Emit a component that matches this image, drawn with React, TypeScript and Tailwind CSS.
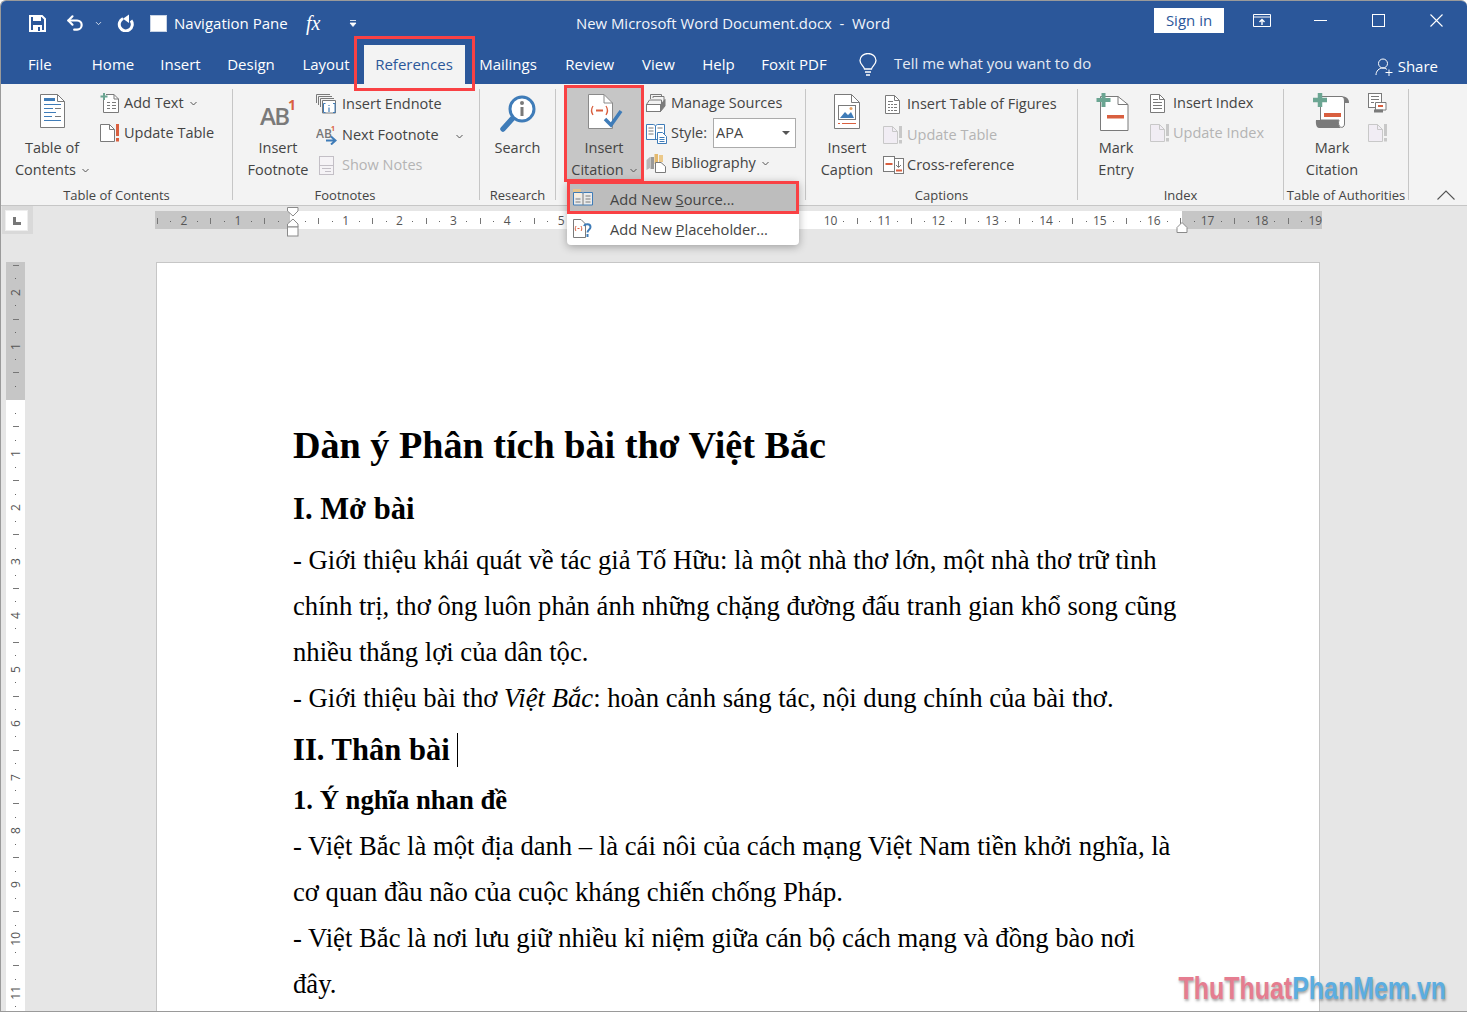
import React from "react";
import { Undo2, ChevronDown } from "lucide-react";

const G = "#7a7a7a";
const BL = "#3f7cb8";
const RD = "#d95f3f";
const GR = "#6ba592";

const Chev = ({ c = "#555" }: { c?: string }) => (
  <svg width="7" height="5" viewBox="0 0 7 5" className="inline-block ml-[6px] shrink-0"><path d="M.5 1l3 3 3-3" fill="none" stroke={c} /></svg>
);

function Doc({ w, h, stroke = G, fill = "#fff", fold = 7, children }: { w: number; h: number; stroke?: string; fill?: string; fold?: number; children?: React.ReactNode }) {
  return (
    <svg width={w} height={h} viewBox={`0 0 ${w} ${h}`} className="shrink-0">
      <path d={`M.5 .5H${w - fold - 0.5}L${w - 0.5} ${fold + 0.5}V${h - 0.5}H.5Z`} fill={fill} stroke={stroke} />
      <path d={`M${w - fold - 0.5} .5V${fold + 0.5}H${w - 0.5}`} fill="none" stroke={stroke} />
      {children}
    </svg>
  );
}

const Lines = ({ x, y, w, n, gap = 3, c = G }: { x: number; y: number; w: number; n: number; gap?: number; c?: string }) => (
  <>
    {Array.from({ length: n }).map((_, i) => (
      <path key={i} d={`M${x} ${y + i * gap + 0.5}h${w}`} stroke={c} />
    ))}
  </>
);

const IconToc = () => (
  <Doc w={25} h={34}>
    <rect x="4" y="4" width="11" height="3" fill={BL} />
    <Lines x={4} y={10} w={17} n={1} c={BL} />
    <Lines x={4} y={14} w={9} n={1} c={BL} />
    <Lines x={15} y={14} w={6} n={1} c={G} />
    <Lines x={4} y={18} w={12} n={1} c={BL} />
    <Lines x={4} y={22} w={8} n={1} c={BL} />
    <Lines x={15} y={22} w={6} n={1} c={G} />
    <Lines x={4} y={26} w={17} n={1} c={BL} />
  </Doc>
);

const IconAddText = () => (
  <svg width="19" height="20" viewBox="0 0 19 20" className="shrink-0">
    <path d="M3.500 5.500V19.500H18.500V6L14 1.500H6" fill="#fff" stroke={G} />
    <path d="M14 1.500V6H18.500" fill="none" stroke={G} />
    <path d="M7 9.500h3M12 9.500h4M7 12.500h3M12 12.500h4M7 15.500h3M12 15.500h4" stroke={G} />
    <path d="M4 0v7M.5 3.500h7" stroke={GR} strokeWidth="2" />
  </svg>
);

const IconUpdate = ({ dis }: { dis?: boolean }) => (
  <svg width="20" height="20" viewBox="0 0 20 20" className="shrink-0">
    <path d="M.5 1.500H9.500L14.500 6.500V18.500H.5Z" fill={dis ? "#f1edf4" : "#fff"} stroke={dis ? "#c8c8c8" : G} />
    <path d="M9.500 1.500V6.500H14.500" fill="none" stroke={dis ? "#c8c8c8" : G} />
    <rect x="16" y="1" width="3" height="12" fill={dis ? "#c8c8c8" : RD} />
    <rect x="16" y="15" width="3" height="3.500" fill={dis ? "#c8c8c8" : RD} />
  </svg>
);

const IconEndnote = () => (
  <svg width="20" height="20" viewBox="0 0 20 20" className="shrink-0">
    <path d="M.5 9V.5H14M2.500 11V2.500H16M4.500 13V4.500H18" fill="none" stroke={G} />
    <path d="M6.500 19V6.500H19.500V19H6.500" fill="#fff" stroke={G} />
    <path d="M9.500 9.500h-2v9h2M17 9.500h2v9h-2" fill="none" stroke={BL} />
    <path d="M13 11v1M13 13.500v4.500" stroke={BL} strokeWidth="1.200" />
  </svg>
);

const IconNextFoot = () => (
  <svg width="21" height="20" viewBox="0 0 21 20" className="shrink-0">
    <text x="0" y="13" fontSize="12" fontWeight="600" fill="#777" fontFamily="'Open Sans',sans-serif">AB</text>
    <text x="15" y="6" fontSize="7" fontWeight="700" fill={RD} fontFamily="'Open Sans',sans-serif">1</text>
    <path d="M10 15.500h9M15 11.500l4.500 4-4.500 4" fill="none" stroke={BL} strokeWidth="2" />
  </svg>
);

const IconNotes = () => (
  <svg width="15" height="19" viewBox="0 0 15 19" className="shrink-0">
    <rect x=".5" y=".5" width="14" height="18" fill="#f5f3f6" stroke="#c3bfc6" />
    <path d="M.5 9.500h14M3 12.500h9M6 15.500h6" stroke="#c3bfc6" />
  </svg>
);

const IconSearch = () => (
  <svg width="36" height="38" viewBox="0 0 36 38" className="shrink-0">
    <circle cx="22" cy="14" r="12" fill="#fff" stroke="#3f7cb8" strokeWidth="3" />
    <path d="M12 24L3 34" stroke="#3f7cb8" strokeWidth="5.500" strokeLinecap="round" />
    <circle cx="22" cy="8" r="2" fill={G} />
    <rect x="20.500" y="12" width="3" height="9" fill={G} />
  </svg>
);

const IconCitation = () => (
  <svg width="36" height="36" viewBox="0 0 36 36" className="shrink-0">
    <path d="M1.500 .5H17L25.500 9V34.500H1.500Z" fill="#fff" stroke="#8a8a8a" />
    <path d="M17 .5V9H25.500" fill="none" stroke="#8a8a8a" />
    <path d="M6 12c-2 3-2 6 0 9M19 12c2 3 2 6 0 9" fill="none" stroke={RD} strokeWidth="1.300" />
    <path d="M9 16.500h7" stroke={RD} strokeWidth="2" />
    <path d="M18 25l6 6L34 17" fill="none" stroke="#3f7cb8" strokeWidth="3.500" />
  </svg>
);

const IconManage = () => (
  <svg width="20" height="20" viewBox="0 0 20 20" className="shrink-0">
    <path d="M4.500 6V1.500H15.500V4M7 5V3.500H18V12" fill="none" stroke={G} />
    <path d="M3.500 7H15.500V11" fill="none" stroke={G} />
    <rect x=".5" y="11.500" width="14" height="7" fill="#fff" stroke={G} />
    <path d="M.5 11.500L3.500 7M14.500 11.500L19 6.500V13L14.500 18.500" fill={G} stroke={G} />
  </svg>
);

const IconStyle = () => (
  <svg width="21" height="21" viewBox="0 0 21 21" className="shrink-0">
    <path d="M.5 1.500H7C8 1.500 9 2 9.500 3 10 2 11 1.500 12 1.500H18.500V16.500H.5Z" fill="#fff" stroke="#3f7cb8" />
    <path d="M9.500 3V16.500" stroke="#3f7cb8" />
    <path d="M2.500 5h5M2.500 8h5M2.500 11h5M11.500 5h5" stroke={G} />
    <path d="M11.500 9.500H16.500L20.500 13.500V20.500H11.500Z" fill="#fff" stroke="#3f7cb8" />
    <path d="M13.500 14.500h5M13.500 16.500h5M13.500 18.500h5" stroke={BL} />
  </svg>
);

const IconBiblio = () => (
  <svg width="20" height="20" viewBox="0 0 20 20" className="shrink-0">
    <path d="M.5 7L4 4V15L.5 17Z" fill="#b8b8b8" />
    <rect x="4.500" y="4" width="3.500" height="12" fill="#9a9a9a" />
    <rect x="8.500" y="1" width="3.500" height="10" fill="#e4b96e" />
    <rect x="13" y="2" width="4" height="7" fill="#ecc98a" />
    <path d="M9.500 9.500H15L19.500 13.500V19.500H9.500Z" fill="#fff" stroke={G} />
  </svg>
);

const IconCaption = () => (
  <Doc w={26} h={35} fold={8}>
    <rect x="4.500" y="11.500" width="17" height="14" fill="#fff" stroke={G} />
    <path d="M6 24l5-6 3 3 3-3 3 6Z" fill={BL} />
    <circle cx="17" cy="14.500" r="1.500" fill="#e8a060" />
    <path d="M4 29.500h2M8 29.500h14" stroke={RD} />
  </Doc>
);

const IconFigures = () => (
  <Doc w={15} h={19} fold={5}>
    <path d="M3 6.500h5M3 9.500h2M6 9.500h2M9 9.500h3M3 12.500h2M6 12.500h2M9 12.500h3M3 15.500h2M6 15.500h2M9 15.500h3" stroke={G} />
  </Doc>
);

const IconCross = () => (
  <svg width="21" height="19" viewBox="0 0 21 19" className="shrink-0">
    <rect x=".5" y=".5" width="11" height="15" fill="#fff" stroke={G} />
    <rect x="11.500" y="2.500" width="9" height="15" fill="#fff" stroke={G} />
    <path d="M2.500 8h7" stroke={RD} strokeWidth="2" />
    <path d="M15.500 5v6M13 9l2.500 2.500L18 9" fill="none" stroke={G} />
    <path d="M13 14.500h6" stroke={RD} strokeWidth="2" />
  </svg>
);

const IconMark = () => (
  <svg width="33" height="38" viewBox="0 0 33 38" className="shrink-0">
    <path d="M4.500 3.500H22L32 11.500V37.500H4.500Z" fill="#fff" stroke={G} />
    <path d="M22 3.500V11.500H32" fill="none" stroke={G} />
    <rect x="11" y="22" width="17" height="3.500" fill={RD} />
    <path d="M7.500 0v14M.5 7h14" stroke={GR} strokeWidth="4" />
  </svg>
);

const IconIndex = () => (
  <Doc w={15} h={19} fold={5}>
    <path d="M3 5.500h5M3 8.500h9M3 11.500h9M3 14.500h9" stroke={G} />
  </Doc>
);

const IconMarkCit = () => (
  <svg width="38" height="37" viewBox="0 0 38 37" className="shrink-0">
    <path d="M29 3.500C33 3.500 36 5 36 10H31Z" fill={G} />
    <path d="M7.500 3.500H29C31 4 31.500 6 31.500 9V31C31.500 34 29 35 27.500 34 25.500 33 25 30 26 27H7.500Z" fill="#fff" stroke={G} />
    <path d="M3 27H25.500C25 30 25.500 33 27.500 35H6C3.500 35 2.500 31 3 27Z" fill={G} />
    <rect x="11" y="20" width="17" height="4" fill={RD} />
    <path d="M7 0v14M0 7h14" stroke={GR} strokeWidth="4.500" />
  </svg>
);

const IconMarkSmall = () => (
  <svg width="19" height="20" viewBox="0 0 19 20" className="shrink-0">
    <rect x=".5" y=".5" width="13" height="14" fill="#fff" stroke={G} />
    <path d="M3 3.500h8M3 6.500h8M3 9.500h3" stroke={G} />
    <path d="M7.500 9.500H18V17H7.500Z" fill="#fff" stroke={G} />
    <path d="M10 13h5" stroke={RD} strokeWidth="2" />
    <rect x="6" y="16.500" width="9" height="3" fill={G} />
  </svg>
);

function Big({ icon, lines, chev, w, className = "" }: { icon: React.ReactNode; lines: string[]; chev?: boolean; w: string; className?: string }) {
  return (
    <div className={`flex flex-col items-center shrink-0 ${w} ${className}`}>
      <div className="h-[49px] pt-[6px] shrink-0 flex items-start justify-center">{icon}</div>
      <div className="leading-[22px] whitespace-nowrap">{lines[0]}</div>
      <div className="leading-[22px] whitespace-nowrap flex items-center">
        {lines[1]}
        {chev && <Chev />}
      </div>
    </div>
  );
}

function Row({ icon, slot, label, dis, chev, h = "h-[30px]" }: { icon: React.ReactNode; slot: string; label: string; dis?: boolean; chev?: boolean; h?: string }) {
  return (
    <div className={`flex items-center whitespace-nowrap ${h} ${dis ? "text-[#b4b4b4]" : ""}`}>
      <div className={`${slot} shrink-0 flex items-center`}>{icon}</div>
      {label}
      {chev && <Chev />}
    </div>
  );
}

function Group({ w, label, pr = "", children }: { w: string; label: string; pr?: string; children: React.ReactNode }) {
  return (
    <div className={`${w} shrink-0 pt-[4px] flex flex-col`}>
      <div className="h-[98px] flex">{children}</div>
      <div className={`h-[18px] leading-[18px] text-[13px] text-center whitespace-nowrap ${pr}`}>{label}</div>
    </div>
  );
}

const Sep = () => <div className="w-px h-[111px] mt-[5px] bg-[#c6c6c6] shrink-0" />;

const Tab = ({ w, t, active }: { w: string; t: string; active?: boolean }) => (
  <div className={`${w} h-[39px] pb-[1px] flex items-center justify-center shrink-0 whitespace-nowrap ${active ? "bg-[#f3f3f3] text-[#2b579a]" : ""}`}>{t}</div>
);

function Tick({ j }: { j: number }) {
  const m = ((j % 4) + 4) % 4;
  const n = j / 4;
  if (j === 0 || (j > 20 && j < 40)) return <div className="w-[13.47px] shrink-0" />;
  return (
    <div className="w-[13.47px] pt-[2px] shrink-0 flex items-center justify-center text-[12px] text-[#555]">
      {m === 0 ? <span>{Math.abs(n)}</span> : m === 2 ? <div className="w-px h-[6px] bg-[#777]" /> : <div className="w-px h-px bg-[#666]" />}
    </div>
  );
}

function VTick({ j }: { j: number }) {
  const m = ((j % 4) + 4) % 4;
  if (j === 0) return <div className="h-[13.47px] shrink-0" />;
  return (
    <div className="h-[13.47px] shrink-0 flex items-center justify-center text-[12px] leading-none text-[#555]">
      {m === 0 ? <span className="[writing-mode:vertical-rl] rotate-180">{Math.abs(j / 4)}</span> : m === 2 ? <div className="h-px w-[6px] bg-[#777]" /> : <div className="w-px h-px bg-[#666]" />}
    </div>
  );
}

const hTicks = Array.from({ length: 88 }, (_, i) => i - 10);
const vTicks = Array.from({ length: 57 }, (_, i) => i - 10);

export default function App() {
  return (
    <div className="relative w-[1467px] h-[1012px] overflow-hidden flex flex-col bg-white border-l border-b border-t border-[#9a9a9a] rounded-t-[6px] text-[14.5px] text-[#444] font-['Open_Sans','Noto_Sans',sans-serif]">
      {/* title bar */}
      <div className="h-[41px] bg-[#2b579a] text-white flex shrink-0 text-[15px]">
        <div className="flex items-center pt-[3px] h-full">
          <svg width="17" height="17" viewBox="0 0 17 17" className="ml-[28px] shrink-0">
            <path d="M1 1H13L16 4V16H1Z" fill="none" stroke="#fff" strokeWidth="2" />
            <rect x="4" y="1" width="8" height="5" fill="#fff" />
            <rect x="4" y="10" width="9" height="6" fill="#fff" />
            <rect x="9" y="12" width="2" height="4" fill="#2b579a" />
          </svg>
          <Undo2 size={20} strokeWidth={2.6} className="ml-[19px] shrink-0" />
          <ChevronDown size={9} strokeWidth={2} className="ml-[9px] shrink-0" />
          <svg width="18" height="18" viewBox="0 0 18 18" className="ml-[14px] shrink-0">
            <path d="M6 4.500A6.500 6.500 0 1 0 14 6.500" fill="none" stroke="#fff" strokeWidth="3" />
            <path d="M12 .5V9L6 4.750Z" fill="#fff" />
          </svg>
          <div className="w-[17px] h-[17px] bg-white ml-[15px] shrink-0 border border-[#c9d4e5]" />
          <span className="ml-[7px] w-[113px] whitespace-nowrap">Navigation Pane</span>
          <span className="ml-[19px] w-[16px] italic font-['Liberation_Serif',serif] text-[20px]">fx</span>
          <svg width="8" height="7" viewBox="0 0 8 7" className="ml-[27px] shrink-0">
            <path d="M1 .5h6M1 3h6L4 6.500Z" fill="#fff" stroke="#fff" strokeWidth=".8" />
          </svg>
          <div className="w-[534px] ml-[1px] whitespace-nowrap pl-[218px] text-[14.9px] text-[#f2f5fa]">New Microsoft Word Document.docx&nbsp; -&nbsp; Word</div>
        </div>
        <div className="flex items-center pb-[3px] h-full">
          <div className="ml-[262px] w-[70px] h-[25px] bg-white text-[#2b579a] flex items-center justify-center shrink-0">Sign in</div>
          <svg width="18" height="13" viewBox="0 0 18 13" className="ml-[29px] shrink-0">
            <path d="M.5 .5H17.500V12.500H.5ZM.5 3H17.500" fill="none" stroke="#fff" />
            <path d="M9 11V5.500M6.500 8L9 5.500 11.500 8" fill="none" stroke="#fff" strokeWidth="1.400" />
          </svg>
          <div className="ml-[43px] w-[13px] h-px bg-white shrink-0" />
          <div className="ml-[45px] w-[13px] h-[13px] border border-white shrink-0" />
          <svg width="13" height="13" viewBox="0 0 13 13" className="ml-[45px] shrink-0">
            <path d="M.5 .5l12 12M12.500 .5l-12 12" stroke="#fff" strokeWidth="1.100" />
          </svg>
        </div>
      </div>
      {/* tabs */}
      <div className="h-[42px] bg-[#2b579a] text-white flex items-end shrink-0 text-[15px]">
        <Tab w="w-[77.5px]" t="File" />
        <Tab w="w-[69px]" t="Home" />
        <Tab w="w-[66px]" t="Insert" />
        <Tab w="w-[75px]" t="Design" />
        <Tab w="w-[75px]" t="Layout" />
        <Tab w="w-[101px]" t="References" active />
        <Tab w="w-[87px]" t="Mailings" />
        <Tab w="w-[76.5px]" t="Review" />
        <Tab w="w-[61px]" t="View" />
        <Tab w="w-[59px]" t="Help" />
        <Tab w="w-[92px]" t="Foxit PDF" />
        <div className="h-[39px] pb-[2px] flex items-center ml-[19px] shrink-0 text-[#e6ebf3]">
          <svg width="18" height="24" viewBox="0 0 18 24" className="shrink-0 mt-[2px]">
            <path d="M5.500 16C5 13 1 11.500 1 7.500A8 7 0 0 1 17 7.500C17 11.500 13 13 12.500 16ZM6 19h6M7 22h4" fill="none" stroke="#fff" strokeWidth="1.300" />
          </svg>
          <span className="ml-[17px] whitespace-nowrap">Tell me what you want to do</span>
        </div>
        <div className="h-[39px] pt-[4px] flex items-center ml-auto mr-[29px] shrink-0">
          <svg width="18" height="20" viewBox="0 0 18 20" className="shrink-0">
            <circle cx="8" cy="6.500" r="4.500" fill="none" stroke="#fff" />
            <path d="M1 18c0-4 3-7 7-7 1.500 0 3 .5 4 1.500M14 12.500v6.500M10.500 15.500h7" fill="none" stroke="#fff" />
          </svg>
          <span className="ml-[5px] whitespace-nowrap">Share</span>
        </div>
      </div>
      {/* ribbon */}
      <div className="h-[122px] bg-[#f3f3f3] border-b border-[#c6c6c6] flex shrink-0">
        <Group w="w-[231px]" label="Table of Contents">
          <Big w="w-[90px]" className="ml-[6px]" icon={<IconToc />} lines={["Table of", "Contents"]} chev />
          <div className="ml-[3px]">
            <Row slot="w-[24px]" icon={<IconAddText />} label="Add Text" chev />
            <Row slot="w-[24px]" icon={<IconUpdate />} label="Update Table" />
          </div>
        </Group>
        <Sep />
        <Group w="w-[246px]" label="Footnotes" pr="pr-[22px]">
          <Big w="w-[70px]" className="ml-[10px]" icon={<div className="relative w-[36px] h-[36px] text-[24px] font-semibold text-[#7a7a7a] pt-[4px] leading-[36px] tracking-[-1.5px]">AB<span className="absolute top-[2px] right-[0px] text-[14px] leading-[18px] font-bold tracking-normal text-[#d95f3f]">1</span></div>} lines={["Insert", "Footnote"]} />
          <div className="ml-[3px] pt-[1px]">
            <Row slot="w-[26px]" h="h-[30.5px]" icon={<IconEndnote />} label="Insert Endnote" />
            <div className="flex items-center">
              <Row slot="w-[26px]" h="h-[30.5px]" icon={<IconNextFoot />} label="Next Footnote" />
              <div className="ml-[11px]"><Chev /></div>
            </div>
            <Row slot="w-[26px]" h="h-[30.5px]" icon={<div className="ml-[3px]"><IconNotes /></div>} label="Show Notes" dis />
          </div>
        </Group>
        <Sep />
        <Group w="w-[75px]" label="Research">
          <Big w="w-[75px]" icon={<div className="pt-[1px]"><IconSearch /></div>} lines={["Search", ""]} />
        </Group>
        <Sep />
        <Group w="w-[249px]" label="">
          <Big w="w-[74px]" className="ml-[11px] bg-[#c6c6c6] h-[92px]" icon={<div className="pl-[2px]"><IconCitation /></div>} lines={["Insert", "Citation"]} chev />
          <div className="ml-[5px]">
            <Row slot="w-[25px]" icon={<IconManage />} label="Manage Sources" />
            <div className="flex items-center h-[30px]">
              <div className="w-[25px] shrink-0"><IconStyle /></div>
              <span className="w-[42px]">Style:</span>
              <div className="w-[83px] h-[30px] border border-[#ababab] bg-white flex items-center pl-[2px] pr-[5px] justify-between">
                <span>APA</span>
                <svg width="8" height="4" viewBox="0 0 8 4"><path d="M0 0h8L4 4Z" fill="#555" /></svg>
              </div>
            </div>
            <Row slot="w-[25px]" icon={<IconBiblio />} label="Bibliography" chev />
          </div>
        </Group>
        <Sep />
        <Group w="w-[271px]" label="Captions">
          <Big w="w-[70px]" className="ml-[6px]" icon={<IconCaption />} lines={["Insert", "Caption"]} />
          <div className="ml-[1px] pt-[1px]">
            <Row slot="w-[24px]" h="h-[30.5px]" icon={<div className="ml-[2px]"><IconFigures /></div>} label="Insert Table of Figures" />
            <Row slot="w-[24px]" h="h-[30.5px]" icon={<IconUpdate dis />} label="Update Table" dis />
            <Row slot="w-[24px]" h="h-[30.5px]" icon={<IconCross />} label="Cross-reference" />
          </div>
        </Group>
        <Sep />
        <Group w="w-[205px]" label="Index">
          <Big w="w-[68px]" className="ml-[4px]" icon={<div className="-mt-[1px] mr-[7px]"><IconMark /></div>} lines={["Mark", "Entry"]} />
          <div>
            <Row slot="w-[23px]" icon={<IconIndex />} label="Insert Index" />
            <Row slot="w-[23px]" icon={<IconUpdate dis />} label="Update Index" dis />
          </div>
        </Group>
        <Sep />
        <Group w="w-[124px]" label="Table of Authorities">
          <Big w="w-[70px]" className="ml-[13px]" icon={<div className="-mt-[1px]"><IconMarkCit /></div>} lines={["Mark", "Citation"]} />
          <div className="ml-[1px]">
            <Row slot="w-[19px]" icon={<IconMarkSmall />} label="" />
            <Row slot="w-[19px]" icon={<IconUpdate dis />} label="" />
          </div>
        </Group>
        <Sep />
        <div className="flex-1 flex items-end justify-end pb-[5px] pr-[12px]">
          <svg width="18" height="10" viewBox="0 0 18 10"><path d="M.5 9.500L9 1l8.500 8.500" fill="none" stroke="#555" strokeWidth="1.100" /></svg>
        </div>
      </div>
      {/* document area */}
      <div className="flex-1 min-h-0 bg-[#e6e6e6] flex flex-col overflow-hidden">
        <div className="h-[56px] flex shrink-0">
          <div className="w-[31px] h-[28px] bg-[#d9d9d9] ml-[1px] pt-[4px] pl-[3px] shrink-0">
            <div className="w-[23px] h-[21px] bg-white border border-[#eee] relative flex items-center justify-center">
              <svg width="8" height="8" viewBox="0 0 8 8"><path d="M0 0h3v5h5v3H0Z" fill="#777" /></svg>
            </div>
          </div>
          <div className="relative ml-[122px] mt-[5px] w-[1167px] h-[18px] shrink-0">
            <div className="absolute inset-0 overflow-hidden flex bg-[linear-gradient(to_right,#c6c6c6_135px,#fff_135px,#fff_1027px,#c6c6c6_1027px)]">
              <div className="flex -ml-[4.7px] leading-[18px]">
                {hTicks.map((j) => <Tick key={j} j={j} />)}
              </div>
            </div>
            <svg width="12" height="30" viewBox="0 0 12 30" className="absolute left-[132px] -top-[4px]">
              <path d="M.5 .5H11V4L6 9 .5 4Z" fill="#fff" stroke="#8a8a8a" />
              <path d="M6 12L11 17V20H.5V17Z" fill="#fff" stroke="#8a8a8a" />
              <rect x=".5" y="20" width="10.500" height="9" fill="#fff" stroke="#8a8a8a" />
            </svg>
            <svg width="12" height="11" viewBox="0 0 12 11" className="absolute left-[1021px] top-[11px]">
              <path d="M6 .5L11 5.500V10.500H1V5.500Z" fill="#fff" stroke="#8a8a8a" />
            </svg>
          </div>
        </div>
        <div className="flex-1 min-h-0 flex overflow-hidden">
          <div className="ml-[5px] w-[19px] shrink-0 overflow-hidden bg-[linear-gradient(to_bottom,#c6c6c6_138px,#fff_138px)]">
            <div className="flex flex-col -mt-[3.5px]">
              {vTicks.map((j) => <VTick key={j} j={j} />)}
            </div>
          </div>
          <div className="ml-[131px] w-[1164px] shrink-0 bg-white border-l border-r border-t border-[#c6c6c6] pl-[136px] pt-[158px] text-black font-['Liberation_Serif','Times_New_Roman',serif] whitespace-nowrap">
            <h1 className="text-[38.15px] font-bold leading-[48px]">Dàn ý Phân tích bài thơ Việt Bắc</h1>
            <h2 className="text-[30.6px] font-bold leading-[40px] mt-[20px]">I. Mở bài</h2>
            <div className="text-[26.67px] leading-[46px] mt-[8px]">
              <p>- Giới thiệu khái quát về tác giả Tố Hữu: là một nhà thơ lớn, một nhà thơ trữ tình</p>
              <p>chính trị, thơ ông luôn phản ánh những chặng đường đấu tranh gian khổ song cũng</p>
              <p>nhiều thắng lợi của dân tộc.</p>
              <p>- Giới thiệu bài thơ <i>Việt Bắc</i>: hoàn cảnh sáng tác, nội dung chính của bài thơ.</p>
            </div>
            <h2 className="text-[30.6px] font-bold leading-[46px] mt-[6px] flex items-center">
              II. Thân bài
              <span className="inline-block w-px h-[34px] bg-black ml-[7px]" />
            </h2>
            <h3 className="text-[26.67px] font-bold leading-[46px] mt-[4px]">1. Ý nghĩa nhan đề</h3>
            <div className="text-[26.67px] leading-[46px]">
              <p>- Việt Bắc là một địa danh – là cái nôi của cách mạng Việt Nam tiền khởi nghĩa, là</p>
              <p>cơ quan đầu não của cuộc kháng chiến chống Pháp.</p>
              <p>- Việt Bắc là nơi lưu giữ nhiều kỉ niệm giữa cán bộ cách mạng và đồng bào nơi</p>
              <p>đây.</p>
            </div>
          </div>
        </div>
      </div>
      {/* dropdown menu */}
      <div className="absolute left-[566px] top-[180px] w-[232px] h-[64px] bg-white rounded-[4px] shadow-[0_2px_8px_rgba(0,0,0,0.3)] py-[2px] text-[14.7px]">
        <div className="h-[30px] pt-[3px] bg-[#bdbdbd] flex items-center pl-[6px]">
          <svg width="20" height="18" viewBox="0 0 20 18" className="shrink-0 -mt-[3px]">
            <rect x="0" y="0" width="8" height="8" fill="#e6c48c" />
            <path d="M.5 3.500H9.500L10 4.500 10.500 3.500H19.500V16H.5Z" fill="#fff" fillOpacity=".7" stroke="#3f7cb8" />
            <path d="M10 4.500V16M12.500 7h5M12.500 10h5M12.500 13h5M2.500 10h5M2.500 13h5" stroke={G} />
          </svg>
          <span className="ml-[17px]">Add New <span className="underline">S</span>ource...</span>
        </div>
        <div className="h-[31px] pt-[2px] flex items-center pl-[6px]">
          <svg width="20" height="20" viewBox="0 0 20 20" className="shrink-0 -mt-[2px]">
            <path d="M.5 .5H8L12.500 5V18.500H.5Z" fill="#fff" stroke={G} />
            <path d="M3 7c-1 2-1 4 0 5M8 7c1 2 1 4 0 5M4.500 9.500h2" fill="none" stroke={RD} />
            <path d="M11 7c1-2.500 6.500-2.500 6.500 1 0 3-3 2.500-3 5.500M14.500 15v3" fill="none" stroke="#3f7cb8" strokeWidth="2" />
          </svg>
          <span className="ml-[17px]">Add New <span className="underline">P</span>laceholder...</span>
        </div>
      </div>
      {/* annotation boxes */}
      <div className="absolute left-[353px] top-[35px] w-[121px] h-[55px] border-[3px] border-[#f94144]" />
      <div className="absolute left-[563px] top-[84px] w-[80px] h-[97px] border-[3px] border-[#f94144]" />
      <div className="absolute left-[566px] top-[180px] w-[232px] h-[33px] border-[3px] border-[#f94144]" />
      {/* watermark */}
      <div className="absolute right-[21px] bottom-[7px] font-['Liberation_Sans',sans-serif] font-bold text-[32px] leading-[32px] whitespace-nowrap origin-right scale-x-[0.78] [text-shadow:1px_2px_3px_rgba(0,0,0,0.35)]">
        <span className="text-[#e57d90]">ThuThuat</span><span className="text-[#5cade0]">PhanMem.vn</span>
      </div>
    </div>
  );
}
